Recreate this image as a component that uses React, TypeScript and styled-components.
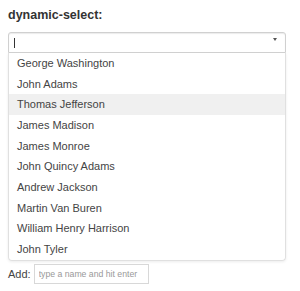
import styled, { createGlobalStyle } from "styled-components";

const GlobalStyle = createGlobalStyle`
  html, body {
    margin: 0;
    padding: 0;
    background: #ffffff;
  }
  body {
    font-family: "Liberation Sans", Arial, sans-serif;
    color: #333333;
  }
`;

const Page = styled.div`
  padding: 6px 14px 0 8px;
  width: 278px;
`;

const Title = styled.div`
  font-size: 12.5px;
  font-weight: bold;
  line-height: 18px;
  margin-bottom: 8px;
  color: #333;
`;

const Control = styled.div`
  position: relative;
  height: 21px;
  border: 1px solid #d0d0d0;
  border-radius: 3px 3px 0 0;
  box-shadow: inset 0 1px 1px rgba(0, 0, 0, 0.08);
  display: flex;
  align-items: center;
  padding: 0 5px;
  box-sizing: border-box;
  background: #fff;
`;

const Cursor = styled.span`
  width: 1px;
  height: 10px;
  background: #333;
`;

const Caret = styled.span`
  position: absolute;
  right: 8px;
  top: 5px;
  width: 0;
  height: 0;
  border-left: 2.5px solid transparent;
  border-right: 2.5px solid transparent;
  border-top: 3px solid #555;
`;

const Dropdown = styled.ul`
  list-style: none;
  margin: 0;
  padding: 0;
  border: 1px solid #e0e0e0;
  border-top: 0;
  border-radius: 0 0 4px 4px;
  box-shadow: 0 1px 3px rgba(0, 0, 0, 0.08);
`;

const Option = styled.li<{ $active?: boolean }>`
  font-size: 11px;
  line-height: 20.67px;
  padding: 0 8px;
  color: #444;
  background: ${(p) => (p.$active ? "#f0f0f0" : "transparent")};
`;

const AddRow = styled.div`
  display: flex;
  align-items: center;
  gap: 3px;
  margin-top: 3px;
  font-size: 11px;
  color: #444;
`;

const AddInput = styled.input`
  width: 115px;
  height: 20px;
  box-sizing: border-box;
  border: 1px solid #d8d8d8;
  padding: 0 4px;
  font-family: "Liberation Sans", Arial, sans-serif;
  font-size: 8.7px;
  outline: none;
  &::placeholder {
    color: #999;
  }
`;

const presidents = [
  "George Washington",
  "John Adams",
  "Thomas Jefferson",
  "James Madison",
  "James Monroe",
  "John Quincy Adams",
  "Andrew Jackson",
  "Martin Van Buren",
  "William Henry Harrison",
  "John Tyler",
];

export default function App() {
  return (
    <>
      <GlobalStyle />
      <Page>
        <Title>dynamic-select:</Title>
        <Control>
          <Cursor />
          <Caret />
        </Control>
        <Dropdown>
          {presidents.map((name) => (
            <Option key={name} $active={name === "Thomas Jefferson"}>
              {name}
            </Option>
          ))}
        </Dropdown>
        <AddRow>
          Add:
          <AddInput placeholder="type a name and hit enter" />
        </AddRow>
      </Page>
    </>
  );
}
